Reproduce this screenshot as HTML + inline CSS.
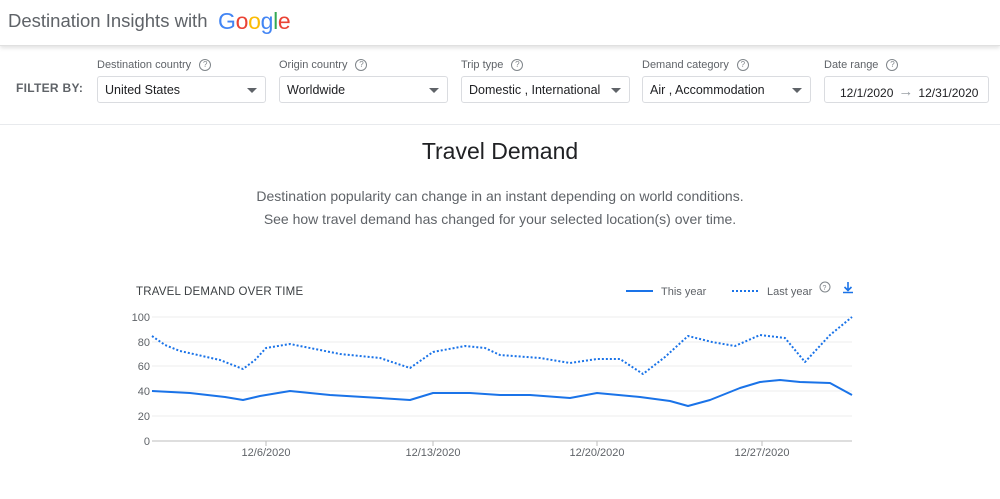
<!DOCTYPE html>
<html><head><style>
*{margin:0;padding:0;box-sizing:border-box}
body{width:1000px;height:499px;background:#fff;font-family:"Liberation Sans",Arial,sans-serif;color:#3c4043;position:relative;overflow:hidden}
.hdr{position:absolute;left:0;top:0;width:1000px;height:46px;border-bottom:1px solid #e0e0e0;box-shadow:0 2px 4px rgba(0,0,0,.12)}
.title{position:absolute;left:8px;top:10px;font-size:18.5px;color:#5f6368;white-space:nowrap}
.g{position:absolute;left:218px;top:8px;font-size:23px;letter-spacing:-.3px}
.fb{position:absolute;left:16px;top:81px;font-size:12px;font-weight:bold;color:#5f6368;letter-spacing:.3px}
.lab{position:absolute;top:59px;font-size:11px;color:#5f6368;white-space:nowrap}
.q{display:inline-block;width:12px;height:12px;border:1px solid #80868b;border-radius:50%;font-size:8px;text-align:center;line-height:10px;margin-left:8px;color:#80868b;vertical-align:1px}
.sel{position:absolute;top:76px;height:27px;border:1px solid #dadce0;border-radius:3px;font-size:12.5px;color:#202124;padding:6px 7px;white-space:nowrap}
.sel .ar{position:absolute;right:8px;top:11px;width:0;height:0;border-left:5px solid transparent;border-right:5px solid transparent;border-top:5px solid #5f6368}
.sep{position:absolute;left:0;top:124px;width:1000px;border-top:1px solid #e8eaed}
h1{position:absolute;top:138px;width:1000px;text-align:center;font-weight:normal;font-size:23px;color:#202124}
.p{position:absolute;width:1000px;text-align:center;font-size:14px;color:#5f6368}
</style></head><body>
<div class="hdr"><div class="title">Destination Insights with</div>
<div class="g"><span style="color:#4285f4">G</span><span style="color:#ea4335">o</span><span style="color:#fbbc05">o</span><span style="color:#4285f4">g</span><span style="color:#34a853">l</span><span style="color:#ea4335">e</span></div></div>
<div class="fb">FILTER BY:</div>
<div class="lab" style="left:97px">Destination country<span class="q">?</span></div>
<div class="lab" style="left:279px">Origin country<span class="q">?</span></div>
<div class="lab" style="left:461px">Trip type<span class="q">?</span></div>
<div class="lab" style="left:642px">Demand category<span class="q">?</span></div>
<div class="lab" style="left:824px">Date range<span class="q">?</span></div>
<div class="sel" style="left:97px;width:169px">United States<span class="ar"></span></div>
<div class="sel" style="left:279px;width:169px">Worldwide<span class="ar"></span></div>
<div class="sel" style="left:461px;width:169px">Domestic , International<span class="ar"></span></div>
<div class="sel" style="left:642px;width:169px">Air , Accommodation<span class="ar"></span></div>
<div class="sel" style="left:824px;width:165px;padding-left:15px;font-size:12px;padding-top:7px">12/1/2020<span style="color:#9aa0a6;font-size:15px;margin:0 5px;position:relative;top:-1px">→</span>12/31/2020</div>
<div class="sep"></div>
<h1>Travel Demand</h1>
<div class="p" style="top:188px">Destination popularity can change in an instant depending on world conditions.</div>
<div class="p" style="top:211px">See how travel demand has changed for your selected location(s) over time.</div>
<svg style="position:absolute;left:0;top:0" width="1000" height="499">
<g font-family="Liberation Sans,Arial,sans-serif" font-size="11" fill="#5f6368">
<text x="136" y="295" font-size="11.5" fill="#3c4043" letter-spacing=".2">TRAVEL DEMAND OVER TIME</text>
<line x1="626" y1="291" x2="653" y2="291" stroke="#1a73e8" stroke-width="2"/>
<text x="661" y="295">This year</text>
<line x1="732" y1="291" x2="760" y2="291" stroke="#1a73e8" stroke-width="2" stroke-dasharray="2,2"/>
<text x="767" y="295">Last year</text>
<circle cx="825" cy="287" r="5" fill="none" stroke="#80868b"/><text x="822.5" y="290" font-size="7" fill="#80868b">?</text>
<path d="M848 282v8M844.5 287l3.5 3.5 3.5-3.5M843 292.5h10" stroke="#1a73e8" stroke-width="1.6" fill="none"/>
<g stroke="#eeeeee"><line x1="152" y1="317" x2="852" y2="317"/><line x1="152" y1="342" x2="852" y2="342"/><line x1="152" y1="366" x2="852" y2="366"/><line x1="152" y1="391" x2="852" y2="391"/><line x1="152" y1="416" x2="852" y2="416"/></g>
<line x1="152" y1="441" x2="852" y2="441" stroke="#bdbdbd"/>
<g text-anchor="end"><text x="150" y="321">100</text><text x="150" y="346">80</text><text x="150" y="370">60</text><text x="150" y="395">40</text><text x="150" y="420">20</text><text x="150" y="445">0</text></g>
<g stroke="#bdbdbd"><line x1="266" y1="441" x2="266" y2="446"/><line x1="433" y1="441" x2="433" y2="446"/><line x1="597" y1="441" x2="597" y2="446"/><line x1="762" y1="441" x2="762" y2="446"/></g>
<g text-anchor="middle"><text x="266" y="456">12/6/2020</text><text x="433" y="456">12/13/2020</text><text x="597" y="456">12/20/2020</text><text x="762" y="456">12/27/2020</text></g>
<polyline fill="none" stroke="#1a73e8" stroke-width="2" stroke-linejoin="round" points="152,391 190,393 225,397 243,400 260,396 290,391 330,395 380,398 410,400 433,393 470,393 500,395 530,395 570,398 597,393 640,397 670,401 688,406 710,400 740,388 760,382 780,380 800,382 830,383 852,395"/>
<polyline fill="none" stroke="#1a73e8" stroke-width="2" stroke-dasharray="2,2" stroke-linejoin="round" points="152,336 165,345 180,351 220,360 243,369 255,360 266,348 290,344 340,354 380,358 395,363 410,368 433,352 465,346 485,348 500,355 540,358 570,363 597,359 620,359 643,374 665,357 688,336 712,342 735,346 760,335 785,338 805,362 830,335 852,317"/>
</g></svg>
</body></html>
